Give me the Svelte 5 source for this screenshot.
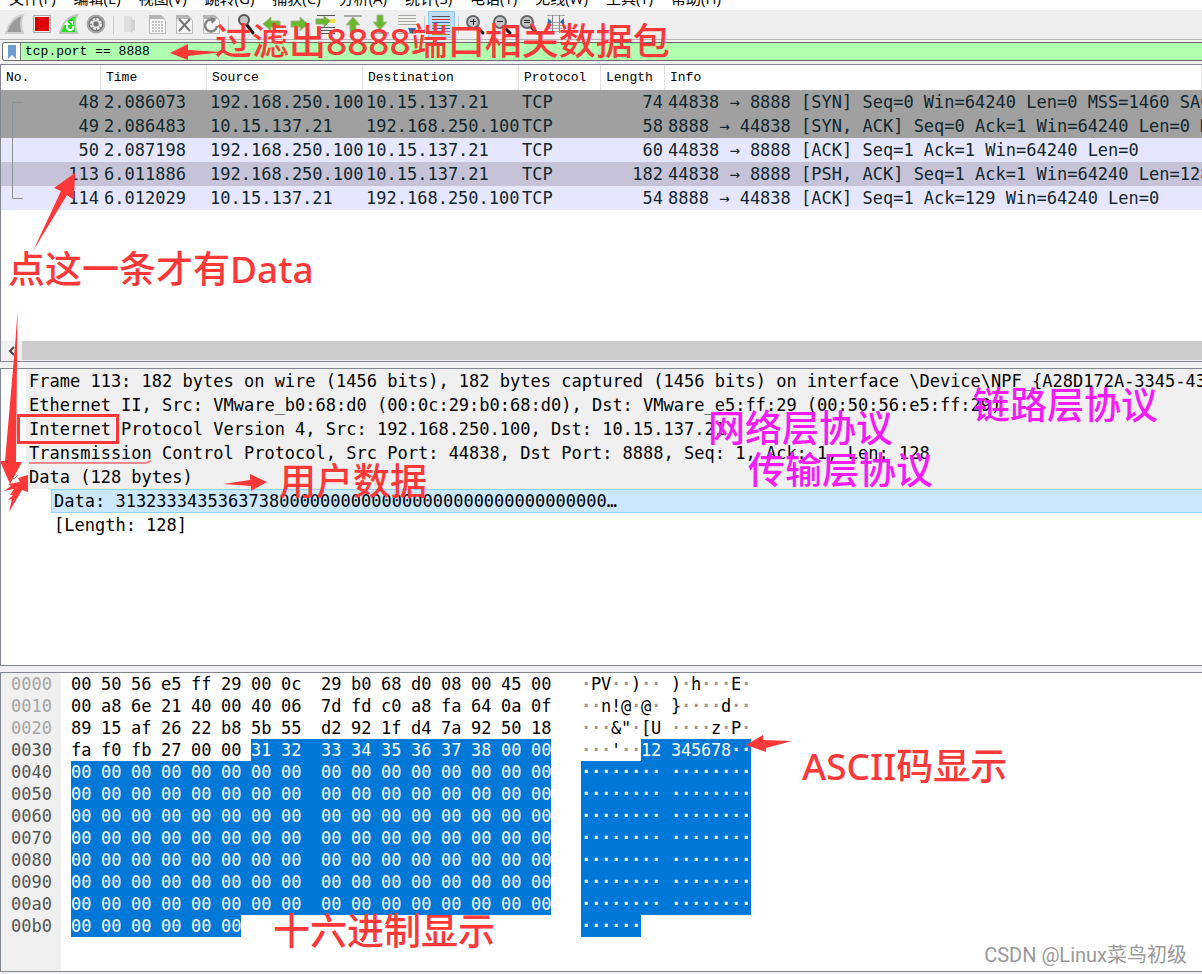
<script>
  const menus = ['文件(F)', '编辑(E)', '视图(V)', '跳转(G)', '捕获(C)', '分析(A)', '统计(S)', '电话(T)', '无线(W)', '工具(T)', '帮助(H)'];

  const toolGroups = [
    ['start', 'stop', 'restart', 'options'],
    ['open', 'save', 'close', 'reload'],
    ['find', 'back', 'forward', 'goto', 'first', 'last', 'autoscroll'],
    ['colorize'],
    ['zoomin', 'zoomout', 'zoomreset', 'resize']
  ];

  const columns = ['No.', 'Time', 'Source', 'Destination', 'Protocol', 'Length', 'Info'];
  const client = '192.168.250.100';
  const server = '10.15.137.21';
  const packets = [
    { no: 48, time: '2.086073', src: client, dst: server, len: 74, kind: 'syn', info: '44838 → 8888 [SYN] Seq=0 Win=64240 Len=0 MSS=1460 SACK_PERM=1' },
    { no: 49, time: '2.086483', src: server, dst: client, len: 58, kind: 'syn', info: '8888 → 44838 [SYN, ACK] Seq=0 Ack=1 Win=64240 Len=0 MSS=1460' },
    { no: 50, time: '2.087198', src: client, dst: server, len: 60, kind: 'tcp', info: '44838 → 8888 [ACK] Seq=1 Ack=1 Win=64240 Len=0' },
    { no: 113, time: '6.011886', src: client, dst: server, len: 182, kind: 'current', info: '44838 → 8888 [PSH, ACK] Seq=1 Ack=1 Win=64240 Len=128' },
    { no: 114, time: '6.012029', src: server, dst: client, len: 54, kind: 'tcp', info: '8888 → 44838 [ACK] Seq=1 Ack=129 Win=64240 Len=0' }
  ];

  const layers = [
    'Frame 113: 182 bytes on wire (1456 bits), 182 bytes captured (1456 bits) on interface \\Device\\NPF_{A28D172A-3345-4370-',
    'Ethernet II, Src: VMware_b0:68:d0 (00:0c:29:b0:68:d0), Dst: VMware_e5:ff:29 (00:50:56:e5:ff:29)',
    'Internet Protocol Version 4, Src: 192.168.250.100, Dst: 10.15.137.21',
    'Transmission Control Protocol, Src Port: 44838, Dst Port: 8888, Seq: 1, Ack: 1, Len: 128',
    'Data (128 bytes)'
  ];

  const header =
    '00 50 56 e5 ff 29 00 0c 29 b0 68 d0 08 00 45 00 ' +
    '00 a8 6e 21 40 00 40 06 7d fd c0 a8 fa 64 0a 0f ' +
    '89 15 af 26 22 b8 5b 55 d2 92 1f d4 7a 92 50 18 ' +
    'fa f0 fb 27 00 00 31 32 33 34 35 36 37 38';
  const bytes = header.split(' ');
  while (bytes.length < 182) bytes.push('00');
  const payloadStart = 54;

  const toChar = (b) => {
    const n = parseInt(b, 16);
    return n > 32 && n < 127 ? String.fromCharCode(n) : '·';
  };

  const dump = [];
  for (let at = 0; at < bytes.length; at += 16) {
    const cells = bytes.slice(at, at + 16).map((b, i) => ({
      hex: b,
      char: toChar(b),
      on: at + i >= payloadStart,
      mid: i === 7,
      end: i === 15 || at + i === bytes.length - 1
    }));
    dump.push({ offset: at.toString(16).padStart(4, '0'), dim: at < 48, cells });
  }
</script>

{#snippet page()}
  <path d="M3.500 2.500h11l5 5v13h-16z" fill="#f7f7f7" stroke="#bcbcbc" />
  <path d="M3 2h12l4 4H3z" fill="#b5b5b5" />
{/snippet}

{#snippet lens(sign)}
  <path d="M13 14l6 6" stroke="#111" stroke-width="3" stroke-linecap="round" />
  <circle cx="9" cy="9" r="6" fill="#c3c6c9" stroke="#666" stroke-width="2" />
  <path d={sign} stroke="#222" fill="none" />
{/snippet}

{#snippet icon(name)}
  <svg width="23" height="23" viewBox="0 0 23 23" aria-hidden="true">
    {#if name === 'start'}
      <path d="M2 20C5 11 9 4 19 2Q15 11 19 20z" fill="#9b9b9b" stroke="#cfcfcf" stroke-width="2" />
    {:else if name === 'stop'}
      <rect x="2.500" y="2.500" width="17" height="17" fill="#eee" stroke="#aaa" />
      <rect x="4" y="4" width="14" height="14" fill="#dd0000" />
    {:else if name === 'restart'}
      <path d="M2 20C5 11 9 4 19 2Q15 11 19 20z" fill="#1fe01f" stroke="#b9c6b9" stroke-width="2" />
      <path d="M9 11v3a3 3 0 0 0 3 3h1a3 3 0 0 0 2-4" fill="none" stroke="#fff" stroke-width="2" />
      <path d="M6 12l3-4 3 4zM11 8h4v4z" fill="#fff" />
    {:else if name === 'options'}
      <circle cx="11" cy="11" r="8.500" fill="#777" stroke="#aaa" stroke-width="2" />
      <circle cx="11" cy="11" r="4.500" fill="none" stroke="#ececec" stroke-width="3" stroke-dasharray="2.500 1" />
      <circle cx="11" cy="11" r="3.500" fill="#777" stroke="#eee" stroke-width="1.500" />
    {:else if name === 'open'}
      <path d="M5 3h7l2 3v13H5z" fill="#dfdfdf" /><path d="M12 7h4v10l-4 3z" fill="#d2d2d2" />
    {:else if name === 'save'}
      {@render page()}
      <path d="M6 9h11M6 12h11M6 15h11M6 18h11" stroke="#c4c4c4" stroke-width="2" stroke-dasharray="2 1" />
    {:else if name === 'close'}
      {@render page()}
      <path d="M6 6l11 12M17 6L6 18" stroke="#737373" stroke-width="2" />
    {:else if name === 'reload'}
      {@render page()}
      <path d="M15 8a6 6 0 1 0 2 5" fill="none" stroke="#858585" stroke-width="2.500" /><path d="M10 4l6 2-4 5z" fill="#858585" />
    {:else if name === 'find'}
      <path d="M13 12l6 8" stroke="#111" stroke-width="3" stroke-linecap="round" />
      <circle cx="10" cy="7" r="5" fill="#c5c5c5" stroke="#555" stroke-width="2" />
    {:else if name === 'back'}
      <path d="M2 11l8-7v4h9v6h-9v4z" fill="#69b82c" stroke="#a5b69a" />
    {:else if name === 'forward'}
      <path d="M20 11l-8-7v4H3v6h9v4z" fill="#69b82c" stroke="#a5b69a" />
    {:else if name === 'goto'}
      <path d="M2 2.500h18M2 14.500h18M2 17.500h18M2 20.500h18" stroke="#555" />
      <path d="M12 8h8" stroke="#f4e04d" stroke-width="4" />
      <path d="M15 8L9 3v3H1v5h8v3z" fill="#69b82c" stroke="#8aa578" />
    {:else if name === 'first'}
      <path d="M2 3h18" stroke="#aaa" stroke-width="2" />
      <path d="M11 4l7 8h-4v7H8v-7H4z" fill="#69b82c" stroke="#a5b69a" />
    {:else if name === 'last'}
      <path d="M2 20h18" stroke="#aaa" stroke-width="2" />
      <path d="M11 17l7-8h-4V2H8v7H4z" fill="#69b82c" stroke="#a5b69a" />
    {:else if name === 'autoscroll'}
      <path d="M2 2.500h18M2 5.500h18M2 8.500h18M2 11.500h18M2 20.500h18" stroke="#a9aaa5" />
      <path d="M12 15h8l-2 5h-4z" fill="#3465a4" />
    {:else if name === 'colorize'}
      <path d="M2 3.500h18" stroke="#555" /><path d="M2 6.500h18" stroke="#d33" /><path d="M2 9.500h18" stroke="#3465a4" />
      <path d="M2 12.500h18" stroke="#5cb51b" /><path d="M2 15.500h18" stroke="#3465a4" /><path d="M2 18.500h18" stroke="#9a6eb0" /><path d="M2 21.500h18" stroke="#b08a20" />
    {:else if name === 'zoomin'}
      {@render lens('M6 8.500h6M9.500 6v6')}
    {:else if name === 'zoomout'}
      {@render lens('M6 8.500h6')}
    {:else if name === 'zoomreset'}
      {@render lens('M6 7.500h6M6 9.500h6')}
    {:else if name === 'resize'}
      <path d="M2 2.500h18M2 9.500h18M2 12.500h18M2 15.500h18M2 18.500h18" stroke="#aaa" />
      <path d="M7.500 2v18M14.500 2v18" stroke="#888" />
      <path d="M3 5l4 4-4 4zM19 5l-4 4 4 4z" fill="#3465a4" />
    {/if}
  </svg>
{/snippet}

<main class="window">
  <nav class="menubar" aria-label="Menu">
    {#each menus as m}<button>{m}</button>{/each}
  </nav>

  <div class="toolbar" role="toolbar" aria-label="Capture tools">
    {#each toolGroups as group, g}
      {#if g}<span class="sep"></span>{/if}
      {#each group as name}
        <button class:checked={name === 'colorize'} aria-label={name}>{@render icon(name)}</button>
      {/each}
    {/each}
  </div>

  <div class="filterbar">
    <div class="filter">
      <button aria-label="Bookmark">
        <svg width="10" height="16" viewBox="0 0 10 16"><path d="M1 1h8v14l-4-4-4 4z" fill="#6f9bd1" /></svg>
      </button>
      <input aria-label="Display filter" value="tcp.port == 8888" />
    </div>
  </div>

  <div class="panes">
    <section class="pane packets">
      <table>
        <colgroup>
          <col class="c-no" /><col class="c-time" /><col class="c-addr" /><col class="c-addr" /><col class="c-proto" /><col class="c-len" /><col />
        </colgroup>
        <thead>
          <tr>{#each columns as c}<th>{c}</th>{/each}</tr>
        </thead>
        <tbody>
          {#each packets as p}
            <tr class={p.kind}>
              <td class="num">{p.no}</td><td>{p.time}</td><td>{p.src}</td><td>{p.dst}</td><td>TCP</td><td class="num">{p.len}</td><td>{p.info}</td>
            </tr>
          {/each}
        </tbody>
      </table>
      <div class="scroll">
        <button aria-label="Scroll left">
          <svg width="8" height="10" viewBox="0 0 8 10"><path d="M6 1L2 5l4 4" fill="none" stroke="#444" stroke-width="2" /></svg>
        </button>
        <div class="thumb"></div>
      </div>
      <svg class="flow" width="12" height="98" viewBox="0 0 12 98" aria-hidden="true"><path d="M11 .5H.5v96H11" fill="none" stroke="#8b9296" /></svg>
    </section>

    <section class="pane tree">
      {#each layers as line, i}
        <div class="node">
          <span class="twist">
            <svg width="8" height="8" viewBox="0 0 8 8"><path d={i === 4 ? 'M0 2l4 4 4-4' : 'M2 0l4 4-4 4'} fill="none" stroke="#999" /></svg>
          </span>
          <span class="label">{line}</span>
        </div>
      {/each}
      <div class="leaf selected">Data: 313233343536373800000000000000000000000000000000…</div>
      <div class="leaf">[Length: 128]</div>
    </section>

    <section class="pane bytes">
      <div class="offsets">
        {#each dump as row}<div class:dim={row.dim}>{row.offset}</div>{/each}
      </div>
      <div class="hex">
        {#each dump as row}
          <div class="line">{#each row.cells as c}<span class="byte" class:on={c.on} class:mid={c.mid} class:end={c.end}>{c.hex}</span>{/each}</div>
        {/each}
      </div>
      <div class="ascii">
        {#each dump as row}
          <div class="line">{#each row.cells as c}<span class="char" class:on={c.on} class:mid={c.mid && !c.end} class:dot={c.char === '·'}>{c.char}</span>{/each}</div>
        {/each}
      </div>
    </section>
  </div>

  <svg class="marks" width="1202" height="974" viewBox="0 0 1202 974" aria-hidden="true">
    <g fill="#fd3838">
      <path d="M170 53L188 44V50L222 52L188 56V60z" />
      <path d="M75 173L54 188L61 191L33 251L67 195L74 200z" />
      <path d="M17.500 310L15.500 340L5 461H0L10 484L22 462H16z" />
      <path d="M4 491L11 486L8 484L20 482L18 478L28 475L28 492L22 490L9 512L12 499L8 500L13 495L10 495L14 489z" />
      <path d="M223 484L250 480V474L267 482L251 491V486z" />
      <path d="M746 745L763 735V740L792 741L766 748V752z" />
    </g>
    <rect x="18.500" y="415.500" width="99" height="27" fill="none" stroke="#fd3838" stroke-width="3" />
    <path d="M29 463H146L151 461" fill="none" stroke="#f58a8a" stroke-width="2" />
  </svg>
  <span class="note" style="left: 215px; top: 16px">过滤出8888端口相关数据包</span>
  <span class="note" style="left: 8px; top: 244px">点这一条才有Data</span>
  <span class="note" style="left: 279px; top: 456px">用户数据</span>
  <span class="note" style="left: 802px; top: 741px">ASCII码显示</span>
  <span class="note" style="left: 273px; top: 906px">十六进制显示</span>
  <span class="note layer" style="left: 973px; top: 380px">链路层协议</span>
  <span class="note layer" style="left: 708px; top: 403px">网络层协议</span>
  <span class="note layer" style="left: 748px; top: 445px">传输层协议</span>
  <span class="credit">CSDN @Linux菜鸟初级</span>
</main>

<style>
  :global(body) { margin: 0; overflow: hidden; }
  * { box-sizing: border-box; }
  button { border: 0; padding: 0; margin: 0; background: none; color: inherit; font: inherit; }
  .window {
    position: relative;
    height: 100vh;
    overflow: hidden;
    display: flex;
    flex-direction: column;
    background: #f0f0f0;
    color: #000;
    font: 17px/24px 'DejaVu Sans Mono', 'Noto Sans CJK SC', monospace;
  }
  .menubar {
    flex: none;
    height: 10px;
    overflow: hidden;
    display: flex;
    align-items: flex-end;
    padding-bottom: 2px;
    background: #fff;
    font: 15px/20px 'Open Sans', 'Noto Sans CJK SC', sans-serif;
  }
  .menubar button { padding: 0 9px; white-space: nowrap; }
  .toolbar {
    flex: none;
    height: 30px;
    display: flex;
    align-items: center;
    padding-left: 2px;
    background: #efefef;
    border-bottom: 1px solid #b4b4b4;
  }
  .toolbar button { width: 27px; height: 27px; display: grid; place-items: center; }
  .toolbar button.checked { background: #c0dcf3; box-shadow: inset 0 0 0 1px #90c8f6; }
  .sep { width: 7px; height: 18px; background: linear-gradient(#ccc, #ccc) center / 1px 100% no-repeat; }
  .filterbar { flex: none; height: 24px; padding: 2px 0 3px 2px; }
  .filter {
    height: 19px;
    display: flex;
    border: 1px solid #6c6c6c;
    border-right: 0;
    border-radius: 3px 0 0 3px;
    background: #afffaf;
    overflow: hidden;
  }
  .filter button { width: 18px; background: #fff; border-right: 1px solid #777; display: grid; place-items: center; }
  .filter input { flex: 1; border: 0; outline: 0; padding: 0 4px; background: none; color: #000; font: 13px/17px 'Liberation Mono', monospace; }
  .panes { flex: 1; min-height: 0; display: flex; flex-direction: column; gap: 6px; padding-bottom: 2px; }
  .pane { position: relative; flex: 298 1 0; min-height: 0; overflow: hidden; border: 1px solid #828790; border-right: 0; background: #fff; }
  .packets { display: flex; flex-direction: column; justify-content: space-between; }
  table { width: 100%; table-layout: fixed; border-collapse: separate; border-spacing: 0; }
  .c-no { width: 100px; }
  .c-time { width: 106px; }
  .c-addr { width: 156px; }
  .c-proto { width: 82px; }
  .c-len { width: 64px; }
  th { height: 25px; padding: 0 4px 0 5px; border-right: 1px solid #e2e2e2; text-align: left; font: 13px/24px 'Liberation Mono', monospace; }
  td { height: 24px; padding: 0 2px 0 3px; white-space: nowrap; overflow: hidden; color: #12272e; }
  .num { text-align: right; }
  .syn { background: #a0a0a0; }
  .tcp { background: #e7e6ff; }
  .current { background: #c6c3d9; }
  .scroll { height: 20px; display: flex; background: #f0f0f0; border-bottom: 1px solid #f0f0f0; }
  .scroll button { width: 21px; display: grid; place-items: center; }
  .thumb { flex: 1; background: #cdcdcd; }
  .flow { position: absolute; left: 11px; top: 37px; }
  .node { display: flex; white-space: pre; }
  .twist { flex: none; width: 25px; display: grid; place-items: center; }
  .label { flex: 1; padding-left: 3px; background: #f0f0f0; }
  .leaf { margin-left: 50px; padding-left: 2px; line-height: 22px; border: 1px solid transparent; white-space: pre; }
  .selected { background: #cce8ff; border-color: #99d1ff; border-right: 0; }
  .bytes { flex-grow: 300; display: flex; line-height: 22px; }
  .offsets { width: 60px; padding-left: 10px; background: #f0f0f0; color: #555; }
  .dim { color: #a5a5a5; }
  .hex { width: 480px; margin: 0 30px 0 10px; }
  .line { display: flex; }
  .byte { width: 30px; }
  .byte.mid { width: 40px; }
  .byte.end { width: 20px; }
  .char { width: 10px; }
  .char.mid { width: 20px; }
  .dot { color: #999; font-weight: 700; }
  .on { background: #0078d7; color: #fff; }
  .marks { position: absolute; left: 0; top: 0; pointer-events: none; }
  .note { position: absolute; white-space: nowrap; color: #fd3838; font: 500 37px/50px 'Noto Sans', 'Noto Sans CJK SC', sans-serif; }
  .layer { color: #f51bf5; }
  .credit { position: absolute; right: 15px; bottom: 5px; color: #999; font: 20px/28px Roboto, 'Noto Sans CJK SC', sans-serif; }
</style>
